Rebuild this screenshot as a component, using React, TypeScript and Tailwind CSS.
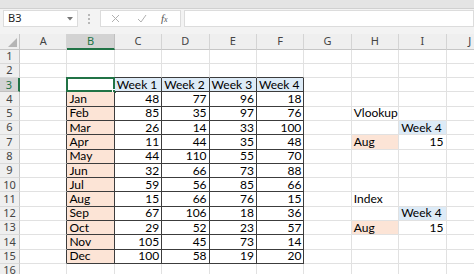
import React from "react";

const COLS = ["A", "B", "C", "D", "E", "F", "G", "H", "I", "J"];

const months = ["Jan", "Feb", "Mar", "Apr", "May", "Jun", "Jul", "Aug", "Sep", "Oct", "Nov", "Dec"];
const data = [
  [48, 77, 96, 18],
  [85, 35, 97, 76],
  [26, 14, 33, 100],
  [11, 44, 35, 48],
  [44, 110, 55, 70],
  [32, 66, 73, 88],
  [59, 56, 85, 66],
  [15, 66, 76, 15],
  [67, 106, 18, 36],
  [29, 52, 23, 57],
  [105, 45, 73, 14],
  [100, 58, 19, 20],
];

type Cell = { text?: string | number; align?: "l" | "r"; bg?: string };

function cellAt(r: number, c: number): Cell {
  // c: 0 = A ... 9 = J
  if (r === 3 && c >= 2 && c <= 5) return { text: `Week ${c - 1}`, bg: "bg-[#ddebf7]" };
  if (r >= 4 && r <= 15 && c === 1) return { text: months[r - 4], bg: "bg-[#fce4d6]" };
  if (r >= 4 && r <= 15 && c >= 2 && c <= 5) return { text: data[r - 4][c - 2], align: "r" };
  if ((r === 5 && c === 7) ) return { text: "Vlookup" };
  if ((r === 11 && c === 7)) return { text: "Index" };
  if ((r === 6 || r === 12) && c === 8) return { text: "Week 4", bg: "bg-[#ddebf7]" };
  if ((r === 7 || r === 13) && c === 7) return { text: "Aug", bg: "bg-[#fce4d6]" };
  if ((r === 7 || r === 13) && c === 8) return { text: 15, align: "r" };
  return {};
}

const inTable = (r: number, c: number) => r >= 3 && r <= 15 && c >= 1 && c <= 5;

export default function App() {
  const rows = Array.from({ length: 16 }, (_, i) => i + 1);
  return (
    <div className="w-[474px] h-[274px] overflow-hidden bg-white font-['Lato','Liberation_Sans',sans-serif]">
      {/* ribbon edge */}
      <div className="h-[9px] bg-[#e4e4e4] border-b border-[#d0d0d0]" />
      {/* formula bar */}
      <div className="h-[25px] bg-[#f3f3f3] flex items-start pt-[1px] text-[#333]">
        <div className="ml-[3px] w-[75px] h-[17px] bg-white border border-[#dcdcdc] flex items-center justify-between px-[4px]">
          <span className="text-[11px] font-['Noto_Sans',sans-serif] text-[#222]">B3</span>
          <svg width="6" height="4" viewBox="0 0 6 4"><path d="M0 0h6L3 3.5z" fill="#777" /></svg>
        </div>
        <div className="w-[22px] h-[17px] flex flex-col items-center justify-center gap-[2px]">
          <span className="w-[2px] h-[2px] bg-[#b8b8b8]" />
          <span className="w-[2px] h-[2px] bg-[#b8b8b8]" />
          <span className="w-[2px] h-[2px] bg-[#b8b8b8]" />
        </div>
        <div className="w-[81px] h-[17px] bg-white border border-[#dcdcdc] flex items-center">
          <svg className="ml-[10px]" width="9" height="9" viewBox="0 0 9 9">
            <path d="M1 1l7 7M8 1L1 8" stroke="#b0b0b0" strokeWidth="1" />
          </svg>
          <svg className="ml-[17px]" width="10" height="9" viewBox="0 0 10 9">
            <path d="M1 5l3 3 5-7" stroke="#b0b0b0" strokeWidth="1" fill="none" />
          </svg>
          <span className="ml-[14px] text-[11px] italic font-['Liberation_Serif',serif] text-[#555]">
            f<span className="text-[8px]">x</span>
          </span>
        </div>
        <div className="ml-[3px] flex-1 h-[17px] bg-white border border-[#dcdcdc]" />
      </div>
      {/* grid */}
      <div className="grid grid-cols-[20px_repeat(10,47.4px)] grid-rows-[15.5px_repeat(16,14.3px)] text-[12px] text-black">
        <div className="bg-[#efefef] border-r border-b border-[#c6c6c6] relative">
          <svg className="absolute right-[2px] bottom-[2px]" width="9" height="9" viewBox="0 0 9 9">
            <path d="M9 0V9H0z" fill="#b5b5b5" />
          </svg>
        </div>
        {COLS.map((c, i) => (
          <div
            key={c}
            className={
              i === 1
                ? "bg-[#d3d3d3] border-r border-[#c0c0c0] border-b-2 border-b-[#217346] flex items-center justify-center text-[11px] text-[#217346] font-['Noto_Sans',sans-serif]"
                : "bg-[#efefef] border-r border-b border-[#d4d4d4] border-b-[#c6c6c6] flex items-center justify-center text-[11px] text-[#444] font-['Noto_Sans',sans-serif]"
            }
          >
            {c}
          </div>
        ))}
        {rows.map((r) => (
          <React.Fragment key={r}>
            <div
              className={
                r === 3
                  ? "bg-[#d3d3d3] border-b border-[#c0c0c0] border-r-2 border-r-[#217346] flex items-center justify-center text-[11px] text-[#217346] font-['Noto_Sans',sans-serif]"
                  : "bg-[#efefef] border-r border-b border-[#dadada] border-r-[#c6c6c6] flex items-center justify-center text-[11px] text-[#444] font-['Noto_Sans',sans-serif]"
              }
            >
              {r}
            </div>
            {COLS.map((_, c) => {
              const cell = cellAt(r, c);
              const darkR = inTable(r, c) || inTable(r, c + 1);
              const darkB = inTable(r, c) || inTable(r + 1, c);
              const sel = r === 3 && c === 1;
              return (
                <div
                  key={c}
                  className={[
                    "relative border-r border-b flex items-center px-[2px] leading-none overflow-visible whitespace-nowrap",
                    darkR ? "border-r-[#3c3c3c]" : "border-r-[#e1e1e1]",
                    darkB ? "border-b-[#3c3c3c]" : "border-b-[#e1e1e1]",
                    cell.align === "r" ? "justify-end" : "justify-start",
                    cell.bg ?? "",
                  ].join(" ")}
                >
                  {cell.text}
                  {sel && (
                    <>
                      <div className="absolute -left-[1px] -top-[1px] -right-[1px] -bottom-[1px] border-2 border-[#217346]" />
                      <div className="absolute -right-[3px] -bottom-[3px] w-[5px] h-[5px] bg-[#217346] border border-white" />
                    </>
                  )}
                </div>
              );
            })}
          </React.Fragment>
        ))}
      </div>
    </div>
  );
}
